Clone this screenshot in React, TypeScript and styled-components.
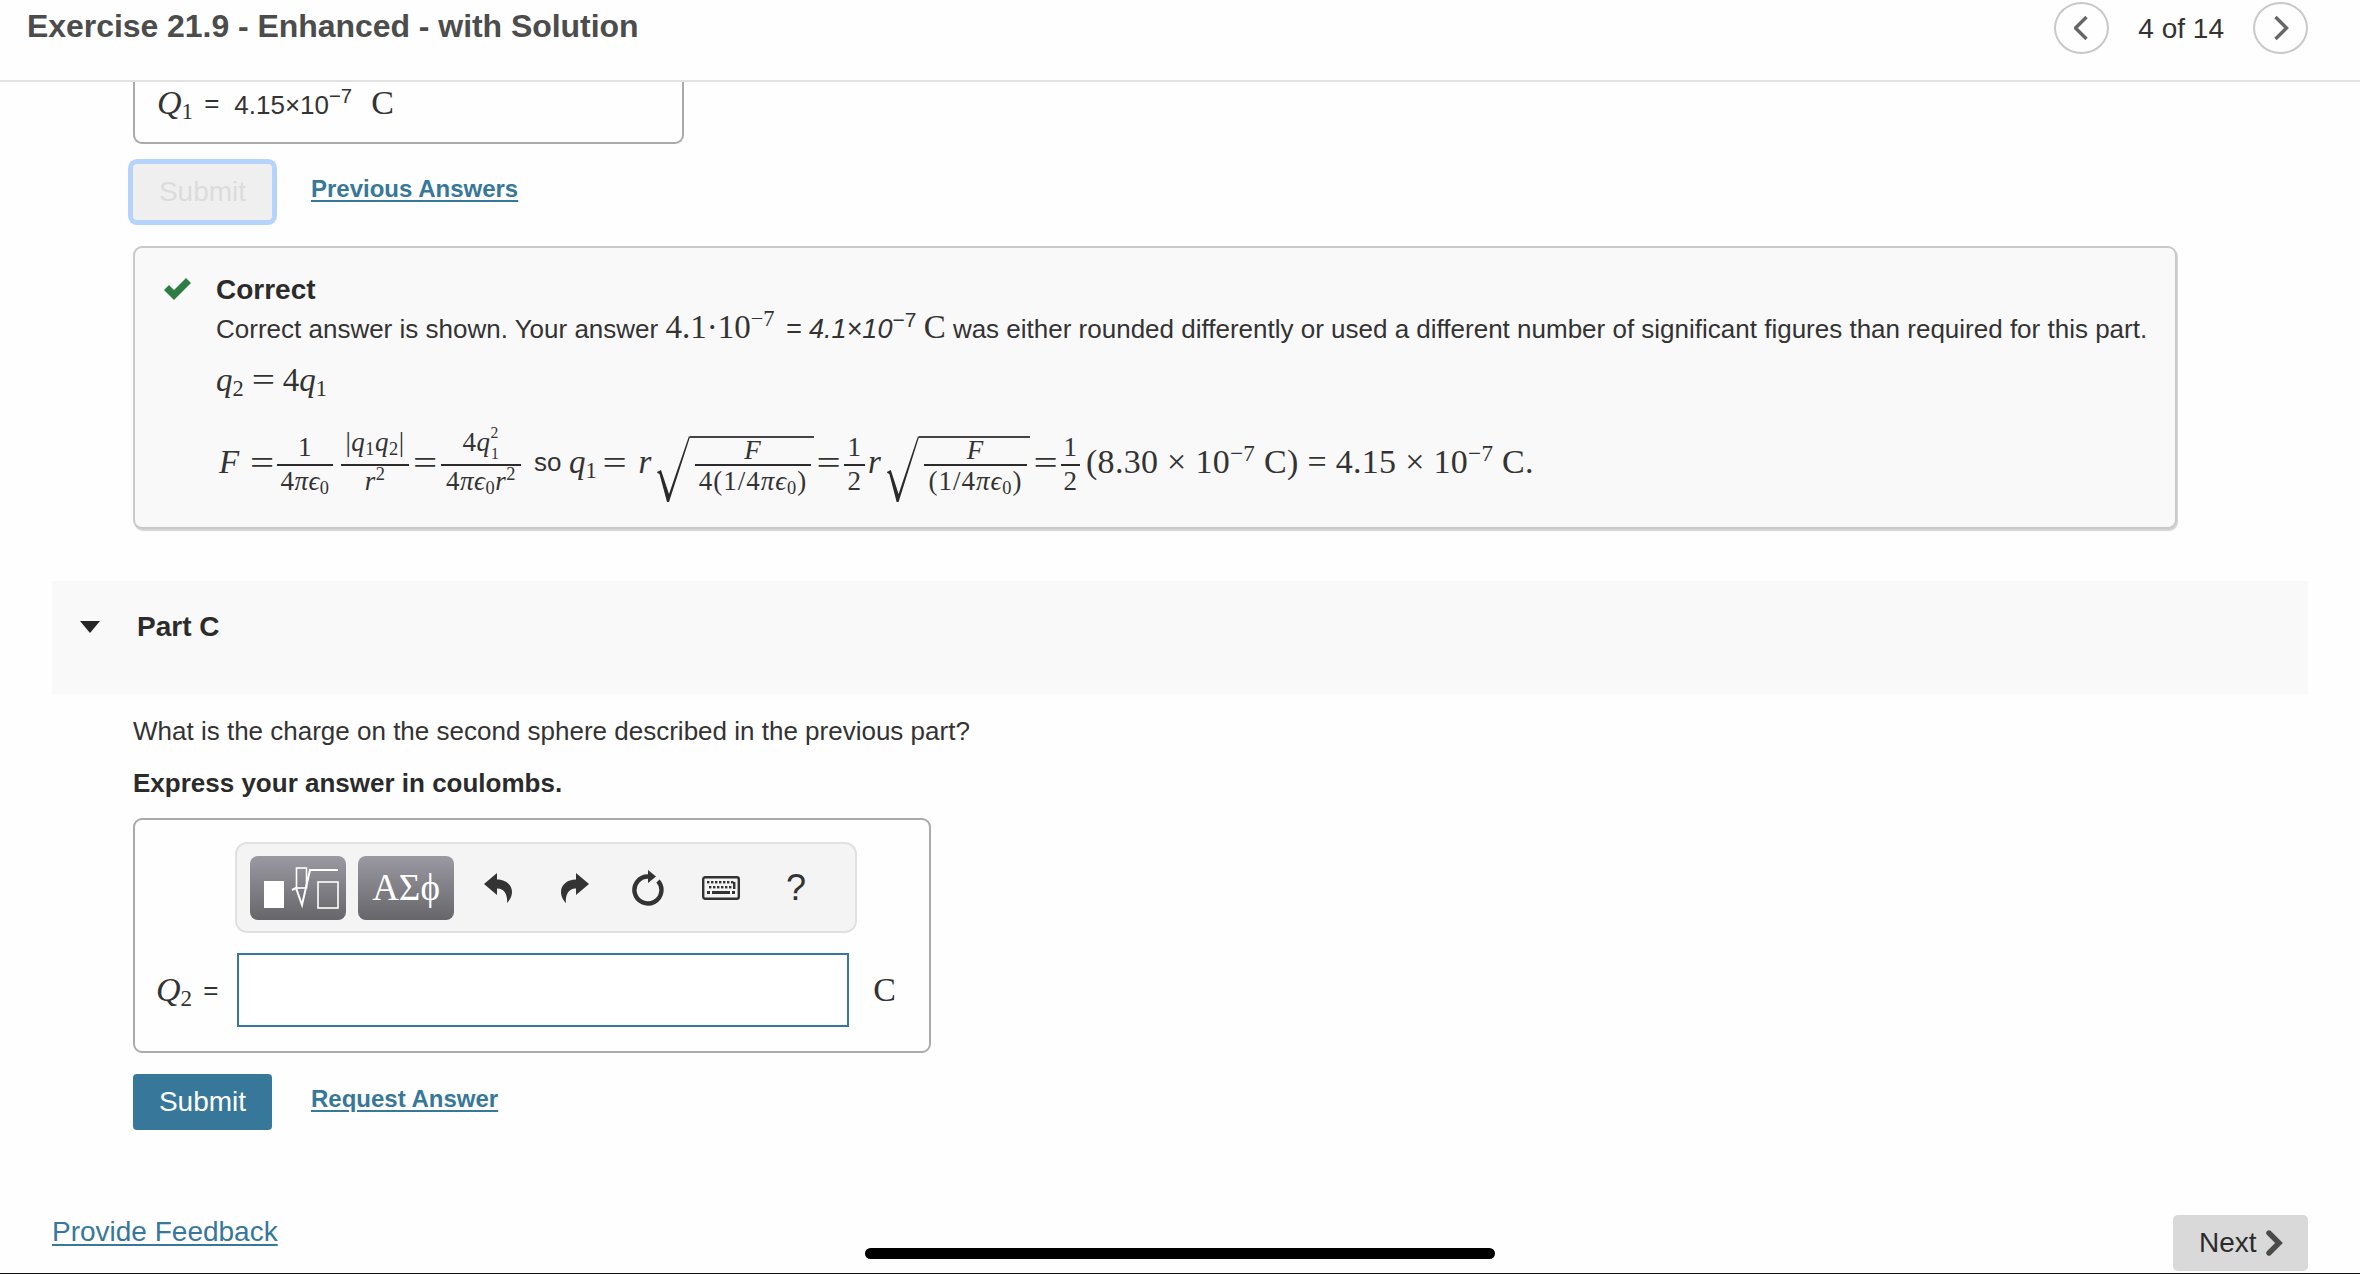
import * as React from "react";
import styled, { createGlobalStyle } from "styled-components";

const GlobalStyle = createGlobalStyle`
  html, body {
    margin: 0;
    padding: 0;
    height: 1274px;
    overflow: hidden;
    background: #fefefe;
    font-family: "Liberation Sans", Arial, sans-serif;
  }
`;

const SERIF = `"Liberation Serif", "Times New Roman", serif`;
const BLUE = "#37789a";

const Page = styled.div`
  position: relative;
  box-sizing: border-box;
  width: 2360px;
  height: 1274px;
  overflow: hidden;
  border-bottom: 1px solid #111;
  color: #333;
  font-size: 26px;
`;

const Header = styled.header`
  box-sizing: border-box;
  height: 82px;
  border-bottom: 2px solid #e2e2e2;
  padding: 0 52px 0 27px;
  display: flex;
  justify-content: space-between;
  align-items: flex-start;
`;

const Title = styled.h1`
  margin: 7px 0 0;
  font-size: 32px;
  line-height: 38px;
  font-weight: 700;
  letter-spacing: -0.05px;
  color: #4c4c4c;
`;

const Pager = styled.div`
  display: flex;
  align-items: center;
  gap: 29px;
  font-size: 28px;
  line-height: 52px;
  color: #333;
`;

const RoundButton = styled.button`
  box-sizing: border-box;
  width: 55px;
  height: 52px;
  border: 2px solid #c8c8c8;
  border-radius: 50%;
  background: none;
  padding: 0;
  display: flex;
  align-items: center;
  justify-content: center;
`;

const PagerCount = styled.span`
  margin-top: 3px;
`;

const AnswerStub = styled.div`
  box-sizing: border-box;
  margin-left: 133px;
  width: 551px;
  height: 62px;
  border: 2px solid #aaa;
  border-top: 0;
  border-radius: 0 0 9px 9px;
  padding-left: 22px;
`;

const MathRow = styled.div`
  display: flex;
  align-items: center;
  height: 42px;
  white-space: nowrap;
`;

const VarQ = styled.span`
  font-family: ${SERIF};
  font-style: italic;
  font-size: 34px;
  line-height: 40px;
  color: #333;
`;

const Sub = styled.sub<{ $stacked?: boolean }>`
  font-size: ${(p) => (p.$stacked ? "0.58em" : "0.68em")};
  font-style: normal;
  line-height: 0;
  vertical-align: ${(p) => (p.$stacked ? "-0.5em" : "-0.22em")};
  margin-left: ${(p) => (p.$stacked ? "-0.5em" : "0")};
`;

const Sup = styled.sup<{ $stacked?: boolean }>`
  font-size: ${(p) => (p.$stacked ? "0.58em" : "0.68em")};
  font-style: normal;
  line-height: 0;
  vertical-align: ${(p) => (p.$stacked ? "0.85em" : "0.52em")};
`;

const Equals = styled.span<{ $ml: number; $mr: number }>`
  margin: 0 ${(p) => p.$mr}px 0 ${(p) => p.$ml}px;
  font-size: 26px;
`;

const AnswerValue = styled.span`
  margin-top: 4px;
  font-size: 26px;
  ${Sup} {
    font-size: 0.78em;
  }
`;

const Unit = styled.span<{ $ml: number }>`
  margin-left: ${(p) => p.$ml}px;
  font-family: ${SERIF};
  font-size: 34px;
`;

const ActionRow = styled.div<{ $mt: number }>`
  margin: ${(p) => p.$mt}px 0 0 133px;
  display: flex;
  align-items: flex-start;
  gap: 39px;
`;

const SubmitButton = styled.button<{ $disabled?: boolean }>`
  box-sizing: border-box;
  width: 139px;
  height: 56px;
  border: 0;
  border-radius: 4px;
  font: 28px/56px "Liberation Sans", Arial, sans-serif;
  padding: 0;
  background: ${(p) => (p.$disabled ? "#efefef" : BLUE)};
  color: ${(p) => (p.$disabled ? "#dcdcdc" : "#fff")};
  box-shadow: ${(p) => (p.$disabled ? "0 0 0 5px #b6d4fb" : "none")};
`;

const ActionLink = styled.a`
  margin-top: 8px;
  font-size: 24px;
  line-height: 34px;
  font-weight: 700;
  color: ${BLUE};
  text-decoration: underline;
  text-decoration-thickness: 2px;
  text-underline-offset: 3px;
`;

const FeedbackCard = styled.section`
  box-sizing: border-box;
  margin: 26px 0 0 133px;
  width: 2044px;
  height: 283px;
  border: 2px solid #c9c9c9;
  border-radius: 9px;
  background: #f9f9f9;
  box-shadow: 1px 2px 1px #d4d4d4;
  padding: 25px 0 0 29px;
  display: flex;
  gap: 25px;
`;

const CheckMark = styled.svg`
  flex: none;
  width: 27px;
  height: 22px;
  margin-top: 5px;
`;

const FeedbackBody = styled.div`
  flex: 1;
  min-width: 0;
`;

const FeedbackTitle = styled.div`
  font-size: 28px;
  line-height: 34px;
  font-weight: 700;
  color: #2b2b2b;
`;

const FeedbackText = styled.p`
  margin: 2px 0 0;
  line-height: 36px;
  white-space: nowrap;
  color: #333;
`;

const SerifInline = styled.span`
  font-family: ${SERIF};
  font-size: 33px;
`;

const ItalicInline = styled.i`
  margin-left: 4px;
  font-size: 27px;
  ${Sup} {
    font-size: 0.78em;
  }
`;

const SimpleEq = styled.div`
  margin-top: 13px;
  font-family: ${SERIF};
  font-size: 33px;
  line-height: 40px;
  color: #333;
`;

const StretchEq = styled.span`
  display: inline-block;
  margin: 0 2px;
  transform: scaleX(1.25);
`;

const Var = styled.i`
  font-family: ${SERIF};
`;

const Equation = styled.div`
  margin-top: 25px;
  padding-left: 1px;
  height: 80px;
  display: flex;
  align-items: center;
  font-family: ${SERIF};
  font-size: 33px;
  white-space: nowrap;
  color: #333;
`;

const Sym = styled.span<{ $w: number; $ml?: number }>`
  flex: none;
  width: ${(p) => p.$w}px;
  margin-left: ${(p) => p.$ml ?? 0}px;
  margin-bottom: 6px;
  text-align: center;
`;

const EqSign = styled(Sym)`
  margin-bottom: 3px;
  transform: scaleX(1.3);
`;

const SansSym = styled(Sym)`
  font-family: "Liberation Sans", Arial, sans-serif;
  font-size: 26px;
`;

const Frac = styled.span<{ $w: number; $ml?: number }>`
  flex: none;
  width: ${(p) => p.$w}px;
  margin-left: ${(p) => p.$ml ?? 0}px;
  display: flex;
  flex-direction: column;
  align-items: stretch;
  text-align: center;
  font-size: 27px;
  letter-spacing: 0.5px;
`;

const FracTop = styled.span<{ $lh?: number }>`
  height: 36px;
  line-height: ${(p) => p.$lh ?? 38}px;
  border-bottom: 2px solid #2b2b2b;
`;

const FracBottom = styled.span`
  height: 36px;
  line-height: 30px;
`;

const Radical = styled.span`
  flex: none;
  align-self: flex-start;
  display: flex;
  align-items: flex-start;
  height: 66px;
  margin-top: 11px;
`;

const Surd = styled.svg<{ $w: number }>`
  flex: none;
  width: ${(p) => p.$w}px;
  height: 66px;
`;

const Radicand = styled.span<{ $w: number }>`
  box-sizing: border-box;
  width: ${(p) => p.$w}px;
  height: 66px;
  border-top: 2px solid #444;
  padding: 0 3px 0 5px;
  display: flex;
  align-items: flex-start;
`;

const RadicandFrac = styled(Frac)`
  flex: 1;
  margin-top: -10px;
  letter-spacing: 1px;
`;

const Tail = styled.span`
  margin: 0 0 6px 6px;
  font-size: 34px;
  letter-spacing: 0.3px;
`;

const PartBand = styled.div`
  box-sizing: border-box;
  margin: 52px 52px 0;
  height: 113px;
  padding: 29px 0 0 28px;
  background: #f9f9f9;
  display: flex;
  align-items: flex-start;
  gap: 37px;
`;

const Caret = styled.span`
  flex: none;
  width: 0;
  height: 0;
  margin-top: 11px;
  border-style: solid;
  border-width: 12px 10.5px 0;
  border-color: #262626 transparent transparent;
`;

const PartTitle = styled.h2`
  margin: 0;
  font-size: 28px;
  line-height: 34px;
  font-weight: 700;
  color: #2b2b2b;
`;

const Question = styled.p<{ $bold?: boolean; $mt: number }>`
  margin: ${(p) => p.$mt}px 0 0 133px;
  line-height: 34px;
  font-weight: ${(p) => (p.$bold ? 700 : 400)};
  color: ${(p) => (p.$bold ? "#2b2b2b" : "#333")};
`;

const AnswerBox = styled.div`
  box-sizing: border-box;
  margin: 18px 0 0 133px;
  width: 798px;
  height: 235px;
  border: 2px solid #aaa;
  border-radius: 9px;
  padding: 22px 0 0 21px;
`;

const Toolbar = styled.div`
  box-sizing: border-box;
  margin-left: 79px;
  width: 622px;
  height: 91px;
  border: 2px solid #e1e1e1;
  border-radius: 12px;
  background: #f4f4f4;
  padding: 12px 0 0 13px;
  display: flex;
  align-items: flex-start;
`;

const PaletteButton = styled.button<{ $ml?: number }>`
  box-sizing: border-box;
  flex: none;
  width: 96px;
  height: 64px;
  margin-left: ${(p) => p.$ml ?? 0}px;
  padding: 0;
  border: 0;
  border-radius: 8px;
  background: linear-gradient(#9b99a2, #66666a);
  color: #fff;
  font-family: ${SERIF};
  font-size: 37px;
  line-height: 64px;
`;

const ToolSlot = styled.span<{ $w: number }>`
  flex: none;
  width: ${(p) => p.$w}px;
  height: 64px;
  display: flex;
  align-items: center;
  justify-content: center;
  color: #333;
  font-size: 36px;
`;

const InputRow = styled.div`
  margin-top: 20px;
  display: flex;
  align-items: center;
  height: 74px;
  white-space: nowrap;
`;

const AnswerInput = styled.input`
  box-sizing: border-box;
  width: 612px;
  height: 74px;
  margin: 0;
  padding: 0;
  border: 2px solid ${BLUE};
  border-radius: 0;
  background: #fff;
  outline: none;
`;

const Footer = styled.footer`
  margin-top: 85px;
  padding: 0 52px;
  display: flex;
  justify-content: space-between;
  align-items: flex-start;
`;

const FeedbackLink = styled.a`
  font-size: 28px;
  line-height: 34px;
  color: ${BLUE};
  text-decoration: underline;
  text-decoration-thickness: 2px;
  text-underline-offset: 3px;
`;

const NextButton = styled.button`
  box-sizing: border-box;
  width: 135px;
  height: 56px;
  border: 0;
  border-radius: 5px;
  background: #d9d9d9;
  color: #2b2b2b;
  font: 28px/56px "Liberation Sans", Arial, sans-serif;
  padding: 0 0 0 26px;
  display: flex;
  align-items: center;
  gap: 9px;
`;

const HomeIndicator = styled.div`
  position: absolute;
  left: 865px;
  bottom: 14px;
  width: 630px;
  height: 11px;
  border-radius: 6px;
  background: #000;
`;

const Chevron = ({ dir }: { dir: "left" | "right" }) => (
  <svg width="16" height="26" viewBox="0 0 16 26" fill="none" stroke="#666" strokeWidth="3.4">
    <path d={dir === "left" ? "M12.5 2 L1.5 13 L12.5 24" : "M2.5 2 L13.5 13 L2.5 24"} />
  </svg>
);

const SurdMark = ({ w }: { w: number }) => (
  <Surd $w={w} viewBox="0 0 36 66" preserveAspectRatio="none">
    <path
      d="M3 36 L7 34 L15 58 L35 0 L36 1 L15 66 L13 66 L5.5 38 L3.5 37 Z"
      fill="#2b2b2b"
    />
  </Surd>
);

const EpsPi = () => (
  <>
    4<Var>πϵ</Var>
    <Sub>0</Sub>
  </>
);

const Keyboard = () => {
  const keys: React.ReactNode[] = [];
  for (let i = 0; i < 7; i++) keys.push(<rect key={"a" + i} x={5 + i * 4} y={5} width="2.4" height="2.4" />);
  for (let i = 0; i < 6; i++) keys.push(<rect key={"b" + i} x={7 + i * 4} y={10} width="2.4" height="2.4" />);
  return (
    <svg width="38" height="24" viewBox="0 0 38 24">
      <rect x="1.2" y="1.2" width="35.6" height="21.6" rx="2" fill="#f4f4f4" stroke="#333" strokeWidth="2.4" />
      <g fill="#333">
        {keys}
        <rect x="5" y="15" width="3" height="3" />
        <rect x="10" y="15" width="18" height="3" />
        <rect x="30" y="15" width="3" height="3" />
        <rect x="31" y="6" width="2.4" height="7" />
      </g>
    </svg>
  );
};

const ARROW = "M0 11 L13 0 V6.5 C22 6.5 28 12 28 19 C28 24 25 28 23 30 C24 22 20 15 13 15.5 V22 Z";

export default function App() {
  return (
    <Page>
      <GlobalStyle />
      <Header>
        <Title>Exercise 21.9 - Enhanced - with Solution</Title>
        <Pager>
          <RoundButton aria-label="previous">
            <Chevron dir="left" />
          </RoundButton>
          <PagerCount>4 of 14</PagerCount>
          <RoundButton aria-label="next">
            <Chevron dir="right" />
          </RoundButton>
        </Pager>
      </Header>

      <AnswerStub>
        <MathRow>
          <VarQ>
            Q<Sub>1</Sub>
          </VarQ>
          <Equals $ml={11} $mr={15}>=</Equals>
          <AnswerValue>
            4.15×10<Sup>−7</Sup>
          </AnswerValue>
          <Unit $ml={19}>C</Unit>
        </MathRow>
      </AnswerStub>

      <ActionRow $mt={20}>
        <SubmitButton $disabled>Submit</SubmitButton>
        <ActionLink>Previous Answers</ActionLink>
      </ActionRow>

      <FeedbackCard>
        <CheckMark viewBox="0 0 27 22">
          <path d="M0 12 L5 7 L10 12 L22 0 L27 5 L10 22 Z" fill="#2e7d44" />
        </CheckMark>
        <FeedbackBody>
          <FeedbackTitle>Correct</FeedbackTitle>
          <FeedbackText>
            Correct answer is shown. Your answer{" "}
            <SerifInline>
              4.1·10<Sup>−7</Sup>
            </SerifInline>{" "}
            <ItalicInline>
              = 4.1×10<Sup>−7</Sup>
            </ItalicInline>{" "}
            <SerifInline>C</SerifInline> was either rounded differently or used a different number of significant
            figures than required for this part.
          </FeedbackText>
          <SimpleEq>
            <Var>q</Var>
            <Sub>2</Sub> <StretchEq>=</StretchEq> 4<Var>q</Var>
            <Sub>1</Sub>
          </SimpleEq>
          <Equation>
            <Sym $w={24}>
              <Var>F</Var>
            </Sym>
            <EqSign $w={30} $ml={6}>=</EqSign>
            <Frac $w={56}>
              <FracTop>1</FracTop>
              <FracBottom>
                <EpsPi />
              </FracBottom>
            </Frac>
            <Frac $w={68} $ml={8}>
              <FracTop $lh={28}>
                |<Var>q</Var>
                <Sub>1</Sub>
                <Var>q</Var>
                <Sub>2</Sub>|
              </FracTop>
              <FracBottom>
                <Var>r</Var>
                <Sup>2</Sup>
              </FracBottom>
            </Frac>
            <EqSign $w={32}>=</EqSign>
            <Frac $w={80}>
              <FracTop $lh={28}>
                4<Var>q</Var>
                <Sup $stacked>2</Sup>
                <Sub $stacked>1</Sub>
              </FracTop>
              <FracBottom>
                <EpsPi />
                <Var>r</Var>
                <Sup>2</Sup>
              </FracBottom>
            </Frac>
            <SansSym $w={27} $ml={13}>so</SansSym>
            <Sym $w={24} $ml={8}>
              <Var>q</Var>
              <Sub>1</Sub>
            </Sym>
            <EqSign $w={43}>=</EqSign>
            <Sym $w={18}>
              <Var>r</Var>
            </Sym>
            <Radical>
              <SurdMark w={36} />
              <Radicand $w={124}>
                <RadicandFrac $w={116}>
                  <FracTop $lh={44}>
                    <Var>F</Var>
                  </FracTop>
                  <FracBottom>
                    4(1/
                    <EpsPi />)
                  </FracBottom>
                </RadicandFrac>
              </Radicand>
            </Radical>
            <EqSign $w={29}>=</EqSign>
            <Frac $w={21} $ml={1}>
              <FracTop>1</FracTop>
              <FracBottom>2</FracBottom>
            </Frac>
            <Sym $w={19}>
              <Var>r</Var>
            </Sym>
            <Radical>
              <SurdMark w={35} />
              <Radicand $w={111}>
                <RadicandFrac $w={103}>
                  <FracTop $lh={44}>
                    <Var>F</Var>
                  </FracTop>
                  <FracBottom>
                    (1/
                    <EpsPi />)
                  </FracBottom>
                </RadicandFrac>
              </Radicand>
            </Radical>
            <EqSign $w={31}>=</EqSign>
            <Frac $w={19}>
              <FracTop>1</FracTop>
              <FracBottom>2</FracBottom>
            </Frac>
            <Tail>
              (8.30 × 10<Sup>−7</Sup> C) = 4.15 × 10<Sup>−7</Sup> C.
            </Tail>
          </Equation>
        </FeedbackBody>
      </FeedbackCard>

      <PartBand>
        <Caret />
        <PartTitle>Part C</PartTitle>
      </PartBand>

      <Question $mt={20}>What is the charge on the second sphere described in the previous part?</Question>
      <Question $mt={18} $bold>Express your answer in coulombs.</Question>

      <AnswerBox>
        <Toolbar>
          <PaletteButton aria-label="templates">
            <svg width="96" height="64" viewBox="0 0 96 64" fill="none" stroke="#fff" strokeWidth="1.6">
              <rect x="14" y="25" width="20" height="27" fill="#fff" stroke="none" />
              <rect x="46.5" y="12" width="10" height="20" />
              <path d="M42 34 L46 32 L52 49 L60 14 H88" strokeWidth="2" />
              <rect x="68" y="26" width="20" height="26" />
            </svg>
          </PaletteButton>
          <PaletteButton $ml={12}>ΑΣϕ</PaletteButton>
          <ToolSlot $w={88}>
            <svg width="28" height="30" viewBox="0 0 28 30">
              <path d={ARROW} fill="#333" />
            </svg>
          </ToolSlot>
          <ToolSlot $w={66}>
            <svg width="28" height="30" viewBox="0 0 28 30">
              <path d={ARROW} fill="#333" transform="matrix(-1 0 0 1 28 0)" />
            </svg>
          </ToolSlot>
          <ToolSlot $w={80}>
            <svg width="32" height="36" viewBox="0 0 32 36">
              <path d="M16 6.5 A13.5 13.5 0 1 0 26 11" fill="none" stroke="#333" strokeWidth="4.4" />
              <path d="M16 0 L24 6.5 L16 13 Z" fill="#333" />
            </svg>
          </ToolSlot>
          <ToolSlot $w={66}>
            <Keyboard />
          </ToolSlot>
          <ToolSlot $w={84}>?</ToolSlot>
        </Toolbar>
        <InputRow>
          <VarQ>
            Q<Sub>2</Sub>
          </VarQ>
          <Equals $ml={11} $mr={19}>=</Equals>
          <AnswerInput />
          <Unit $ml={24}>C</Unit>
        </InputRow>
      </AnswerBox>

      <ActionRow $mt={21}>
        <SubmitButton>Submit</SubmitButton>
        <ActionLink>Request Answer</ActionLink>
      </ActionRow>

      <Footer>
        <FeedbackLink>Provide Feedback</FeedbackLink>
        <NextButton>
          Next
          <svg width="17" height="26" viewBox="0 0 17 26" fill="none" stroke="#4a4a4a" strokeWidth="5.4" strokeLinecap="round">
            <path d="M3 3 L13 13 L3 23" />
          </svg>
        </NextButton>
      </Footer>

      <HomeIndicator />
    </Page>
  );
}
